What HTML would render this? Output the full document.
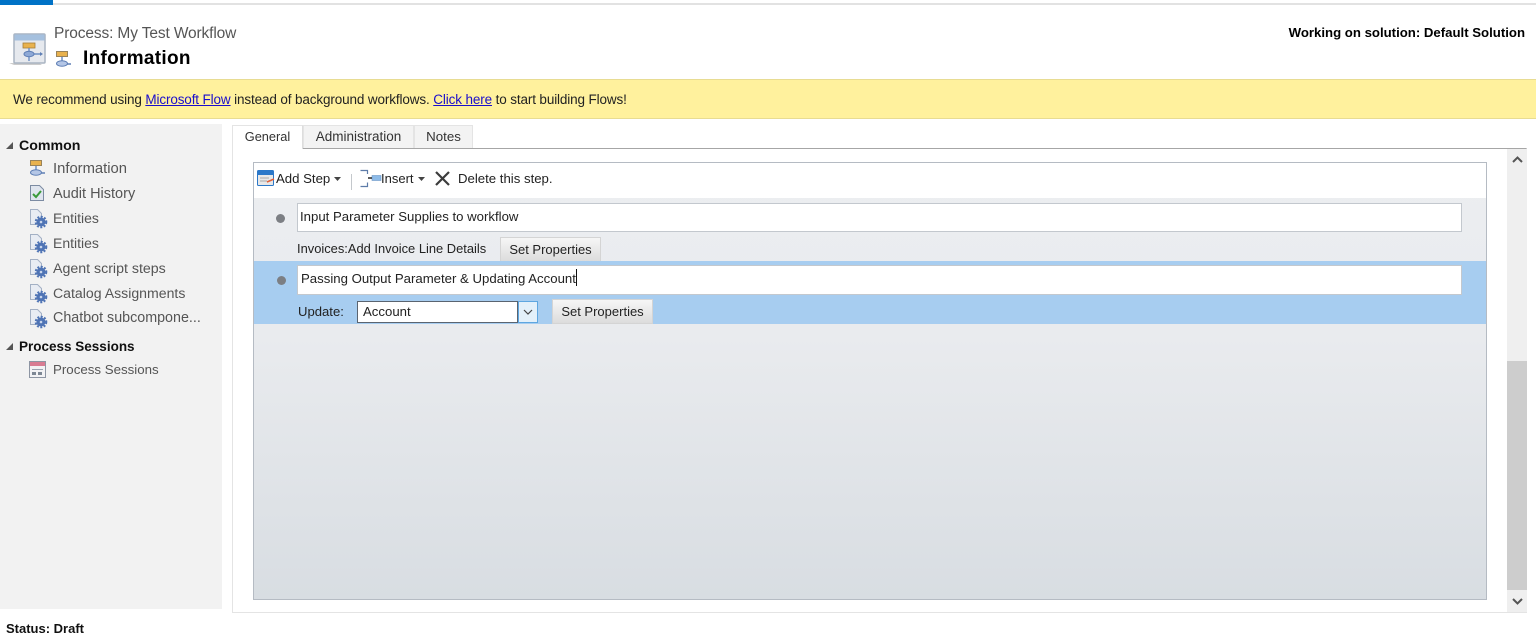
<!DOCTYPE html>
<html><head><meta charset="utf-8"><style>
html,body{margin:0;padding:0;width:1536px;height:643px;overflow:hidden;background:#fff}
body{position:relative;font-family:"Liberation Sans",sans-serif;font-size:14px;color:#222}
.a{position:absolute;white-space:nowrap}
.nav{color:#555;font-size:14.300px;left:53px}
.h{color:#111;font-weight:bold;font-size:14.300px;left:19px}
.tab{position:absolute;top:125px;height:23px;line-height:21px;text-align:center;background:#f3f3f3;border:1px solid #e4e4e4;border-bottom:none;box-sizing:border-box;font-size:13.300px;color:#333}
.btn{position:absolute;background:linear-gradient(#f6f6f6,#dcdcdc);border:1px solid #d4d4d4;box-sizing:border-box;text-align:center;font-size:13px;color:#222}
.inp{position:absolute;background:#fff;border:1px solid #c3c8ce;box-sizing:border-box;font-size:13.200px;color:#222}
svg{position:absolute;overflow:visible;filter:blur(.3px)}
a{color:#1a0dcc}
</style></head><body>
<div class="a" style="left:0;top:3px;width:1536px;height:2px;background:#e2e2e2"></div>
<div class="a" style="left:0;top:0;width:53px;height:5px;background:#0072c6"></div>

<svg style="left:8px;top:31px" width="40" height="36" viewBox="0 0 40 36"><path d="M1 32h30l3 2H6z" fill="#ccc"/><rect x="6" y="3" width="31" height="29" rx="1" fill="#e6e9ee" stroke="#a9b4c2" stroke-width="1.500"/><rect x="6.500" y="3.500" width="30" height="6" fill="#a5c0de"/><rect x="15" y="12" width="12" height="5" fill="#e9b24e" stroke="#a57f3a" stroke-width=".8"/><path d="M21 17v4M21 25v5M25 23h8" stroke="#6d8fc4" stroke-width="1.400" fill="none"/><ellipse cx="21" cy="23" rx="5" ry="2.800" fill="#8ea9d6" stroke="#5f7fb5"/><path d="M32 21l3 2-3 2z" fill="#5f7fb5"/></svg>
<div class="a" style="left:54px;top:25px;font-size:15.500px;letter-spacing:-.13px;color:#555">Process: My Test Workflow</div>
<svg style="left:54px;top:50px" width="20" height="18" viewBox="0 0 20 18"><rect x="2.500" y="1.500" width="11" height="5" fill="#e9b24e" stroke="#99835a"/><path d="M8 7v4" stroke="#6d8fc4" stroke-width="1.500"/><ellipse cx="8" cy="13.500" rx="5.500" ry="2.800" fill="#b4c6e6" stroke="#5f7fb5"/><path d="M13 14h4" stroke="#5f7fb5" stroke-width="1.500"/></svg>
<div class="a" style="left:83px;top:48px;font-size:19px;font-weight:bold;color:#000;letter-spacing:.3px">Information</div>
<div class="a" style="right:11px;top:25px;font-size:13.200px;font-weight:bold;color:#000">Working on solution: Default Solution</div>

<div class="a" style="left:0;top:79px;width:1536px;height:40px;background:#fff19d;border-top:1px solid #e8dc92;border-bottom:1px solid #e8dc92;box-sizing:border-box;line-height:40px;padding-left:13px;font-size:13.500px;letter-spacing:-.13px;color:#222">We recommend using <a href="#">Microsoft Flow</a> instead of background workflows. <a href="#">Click here</a> to start building Flows!</div>

<div class="a" style="left:0;top:124px;width:222px;height:485px;background:#f2f2f2"></div>
<svg style="left:5px;top:141px" width="9" height="9"><path d="M1 8h7V1z" fill="#555"/></svg>
<div class="a h" style="top:138px;font-size:14.200px">Common</div>
<svg style="left:28px;top:159px" width="20" height="18" viewBox="0 0 20 18"><rect x="2.500" y="1.500" width="11" height="5" fill="#e9b24e" stroke="#99835a"/><path d="M8 7v4" stroke="#6d8fc4" stroke-width="1.500"/><ellipse cx="8" cy="13.500" rx="5.500" ry="2.800" fill="#b4c6e6" stroke="#5f7fb5"/><path d="M13 14h4" stroke="#5f7fb5" stroke-width="1.500"/></svg>
<div class="a nav" style="top:161px;font-size:14.800px">Information</div>
<svg style="left:29px;top:184px" width="17" height="18" viewBox="0 0 17 18"><path d="M1.500 1.500h9l4 4v11h-13z" fill="#dfe5ee" stroke="#7c8ba2"/><path d="M4 10l3 3 5-6" stroke="#3a9a3a" stroke-width="2" fill="none"/></svg>
<div class="a nav" style="top:186px;font-size:14.500px">Audit History</div>
<svg style="left:29px;top:209px" width="19" height="19" viewBox="0 0 19 19"><path d="M1.500 .5h7l4 4v11h-11z" fill="#e8ecf3" stroke="#a3b0c4"/><circle cx="12" cy="13" r="4.500" fill="#4f74b5"/><circle cx="12" cy="13" r="5.300" fill="none" stroke="#4f74b5" stroke-width="2" stroke-dasharray="2 1.500"/><circle cx="12" cy="13" r="1.300" fill="#c9d6ec"/></svg>
<div class="a nav" style="top:210px;font-size:14px">Entities</div>
<svg style="left:29px;top:234px" width="19" height="19" viewBox="0 0 19 19"><path d="M1.500 .5h7l4 4v11h-11z" fill="#e8ecf3" stroke="#a3b0c4"/><circle cx="12" cy="13" r="4.500" fill="#4f74b5"/><circle cx="12" cy="13" r="5.300" fill="none" stroke="#4f74b5" stroke-width="2" stroke-dasharray="2 1.500"/><circle cx="12" cy="13" r="1.300" fill="#c9d6ec"/></svg>
<div class="a nav" style="top:235px;font-size:14px">Entities</div>
<svg style="left:29px;top:259px" width="19" height="19" viewBox="0 0 19 19"><path d="M1.500 .5h7l4 4v11h-11z" fill="#e8ecf3" stroke="#a3b0c4"/><circle cx="12" cy="13" r="4.500" fill="#4f74b5"/><circle cx="12" cy="13" r="5.300" fill="none" stroke="#4f74b5" stroke-width="2" stroke-dasharray="2 1.500"/><circle cx="12" cy="13" r="1.300" fill="#c9d6ec"/></svg>
<div class="a nav" style="top:261px;font-size:14.200px">Agent script steps</div>
<svg style="left:29px;top:284px" width="19" height="19" viewBox="0 0 19 19"><path d="M1.500 .5h7l4 4v11h-11z" fill="#e8ecf3" stroke="#a3b0c4"/><circle cx="12" cy="13" r="4.500" fill="#4f74b5"/><circle cx="12" cy="13" r="5.300" fill="none" stroke="#4f74b5" stroke-width="2" stroke-dasharray="2 1.500"/><circle cx="12" cy="13" r="1.300" fill="#c9d6ec"/></svg>
<div class="a nav" style="top:285px;font-size:14.100px">Catalog Assignments</div>
<svg style="left:29px;top:309px" width="19" height="19" viewBox="0 0 19 19"><path d="M1.500 .5h7l4 4v11h-11z" fill="#e8ecf3" stroke="#a3b0c4"/><circle cx="12" cy="13" r="4.500" fill="#4f74b5"/><circle cx="12" cy="13" r="5.300" fill="none" stroke="#4f74b5" stroke-width="2" stroke-dasharray="2 1.500"/><circle cx="12" cy="13" r="1.300" fill="#c9d6ec"/></svg>
<div class="a nav" style="top:310px;font-size:14.300px">Chatbot subcompone...</div>
<svg style="left:5px;top:342px" width="9" height="9"><path d="M1 8h7V1z" fill="#555"/></svg>
<div class="a h" style="top:339px;font-size:13.500px">Process Sessions</div>
<svg style="left:28px;top:360px" width="19" height="19" viewBox="0 0 19 19"><rect x="1.500" y="1.500" width="16" height="16" fill="#f2f2f4" stroke="#8d95a3"/><rect x="2" y="2" width="15" height="4" fill="#d87b92"/><path d="M4 9.500h11" stroke="#9aa3b0"/><rect x="4" y="12" width="4" height="3" fill="#7d8794"/><rect x="10" y="12" width="4" height="3" fill="#7d8794"/></svg>
<div class="a nav" style="top:362px;font-size:13.300px">Process Sessions</div>

<div class="a" style="left:232px;top:148px;width:1295px;height:465px;border:1px solid #e4e4e4;border-top:1px solid #a6a6a6;box-sizing:border-box;background:#fff"></div>
<div class="tab" style="left:232px;width:71px;background:#fff;height:24px;border-right:1px solid #ddd;font-size:12.800px">General</div>
<div class="tab" style="left:303px;width:111px;font-size:13.500px">Administration</div>
<div class="tab" style="left:414px;width:59px">Notes</div>

<div class="a" style="left:253px;top:162px;width:1234px;height:438px;border:1px solid #b5bbc3;box-sizing:border-box;background:linear-gradient(#eceef1 0,#e9ebee 40%,#d8dde2 100%)"></div>
<div class="a" style="left:254px;top:163px;width:1232px;height:35px;background:#fff"></div>
<svg style="left:257px;top:170px" width="18" height="17" viewBox="0 0 18 17"><rect x=".5" y=".5" width="16" height="15" rx="1" fill="#e8e8e8" stroke="#2b78c9"/><rect x="1" y="1" width="15" height="4" fill="#2b78c9"/><path d="M3 8h9M3 11h7" stroke="#aaa"/><path d="M10 12l7-3" stroke="#e0603a" stroke-width="1.500"/></svg>
<div class="a" style="left:276px;top:171px;font-size:13.200px">Add Step</div>
<svg style="left:334px;top:177px" width="7" height="4"><path d="M0 0h7L3.500 4z" fill="#444"/></svg>
<div class="a" style="left:351px;top:174px;width:1px;height:16px;background:#c4c8cc"></div>
<svg style="left:360px;top:167px" width="22" height="21" viewBox="0 0 22 21"><path d="M.5 3.500h7v3.500M.5 19.500h7v-4" stroke="#5d7ba8" fill="none" stroke-width="1.200"/><rect x="12" y="8.500" width="9" height="5" fill="#8dbbe8" stroke="#6b95c5" stroke-width=".6"/><path d="M8 11h4" stroke="#333" stroke-width="1.600"/></svg>
<div class="a" style="left:381px;top:171px;font-size:13px">Insert</div>
<svg style="left:418px;top:177px" width="7" height="4"><path d="M0 0h7L3.500 4z" fill="#444"/></svg>
<svg style="left:434px;top:170px" width="17" height="17" viewBox="0 0 17 17"><path d="M2 2l13 13M15 2L2 15" stroke="#3c3c3c" stroke-width="2.200"/></svg>
<div class="a" style="left:458px;top:171px;font-size:13.200px">Delete this step.</div>

<div class="a" style="left:276px;top:214px;width:9px;height:9px;border-radius:50%;background:#7c7f84"></div>
<div class="inp" style="left:297px;top:203px;width:1165px;height:29px;line-height:25px;padding-left:2px">Input Parameter Supplies to workflow</div>
<div class="a" style="left:297px;top:241px;font-size:12.900px">Invoices:Add Invoice Line Details</div>
<div class="btn" style="left:500px;top:237px;width:101px;height:25px;line-height:24px">Set Properties</div>

<div class="a" style="left:254px;top:261px;width:1232px;height:63px;background:#a7cdf0"></div>
<div class="a" style="left:277px;top:276px;width:9px;height:9px;border-radius:50%;background:#7c7f84"></div>
<div class="inp" style="left:297px;top:265px;width:1165px;height:30px;line-height:25px;padding-left:3px">Passing Output Parameter &amp; Updating Account<span style="display:inline-block;width:1px;height:17px;background:#111;vertical-align:-3px"></span></div>
<div class="a" style="left:298px;top:304px;font-size:13.100px">Update:</div>
<div class="inp" style="left:357px;top:301px;width:161px;height:22px;line-height:20px;padding-left:5px;border-color:#5a6470">Account</div>
<div class="a" style="left:518px;top:301px;width:20px;height:22px;background:#e3f0fa;border:1px solid #5ea6e0;box-sizing:border-box"></div>
<svg style="left:523px;top:309px" width="10" height="6"><path d="M1 1l4 4 4-4" stroke="#444" fill="none" stroke-width="1.200"/></svg>
<div class="btn" style="left:552px;top:299px;width:101px;height:25px;line-height:24px">Set Properties</div>

<div class="a" style="left:1507px;top:149px;width:20px;height:463px;background:#efefef"></div>
<div class="a" style="left:1507px;top:361px;width:20px;height:229px;background:#cdcdcd"></div>
<svg style="left:1512px;top:156px" width="11" height="7"><path d="M1 6l4.500-4.500L10 6" stroke="#555" stroke-width="2" fill="none"/></svg>
<svg style="left:1512px;top:598px" width="11" height="7"><path d="M1 1l4.500 4.500L10 1" stroke="#555" stroke-width="2" fill="none"/></svg>

<div class="a" style="left:6px;top:621px;font-size:13px;font-weight:bold;color:#111">Status: Draft</div>
</body></html>
